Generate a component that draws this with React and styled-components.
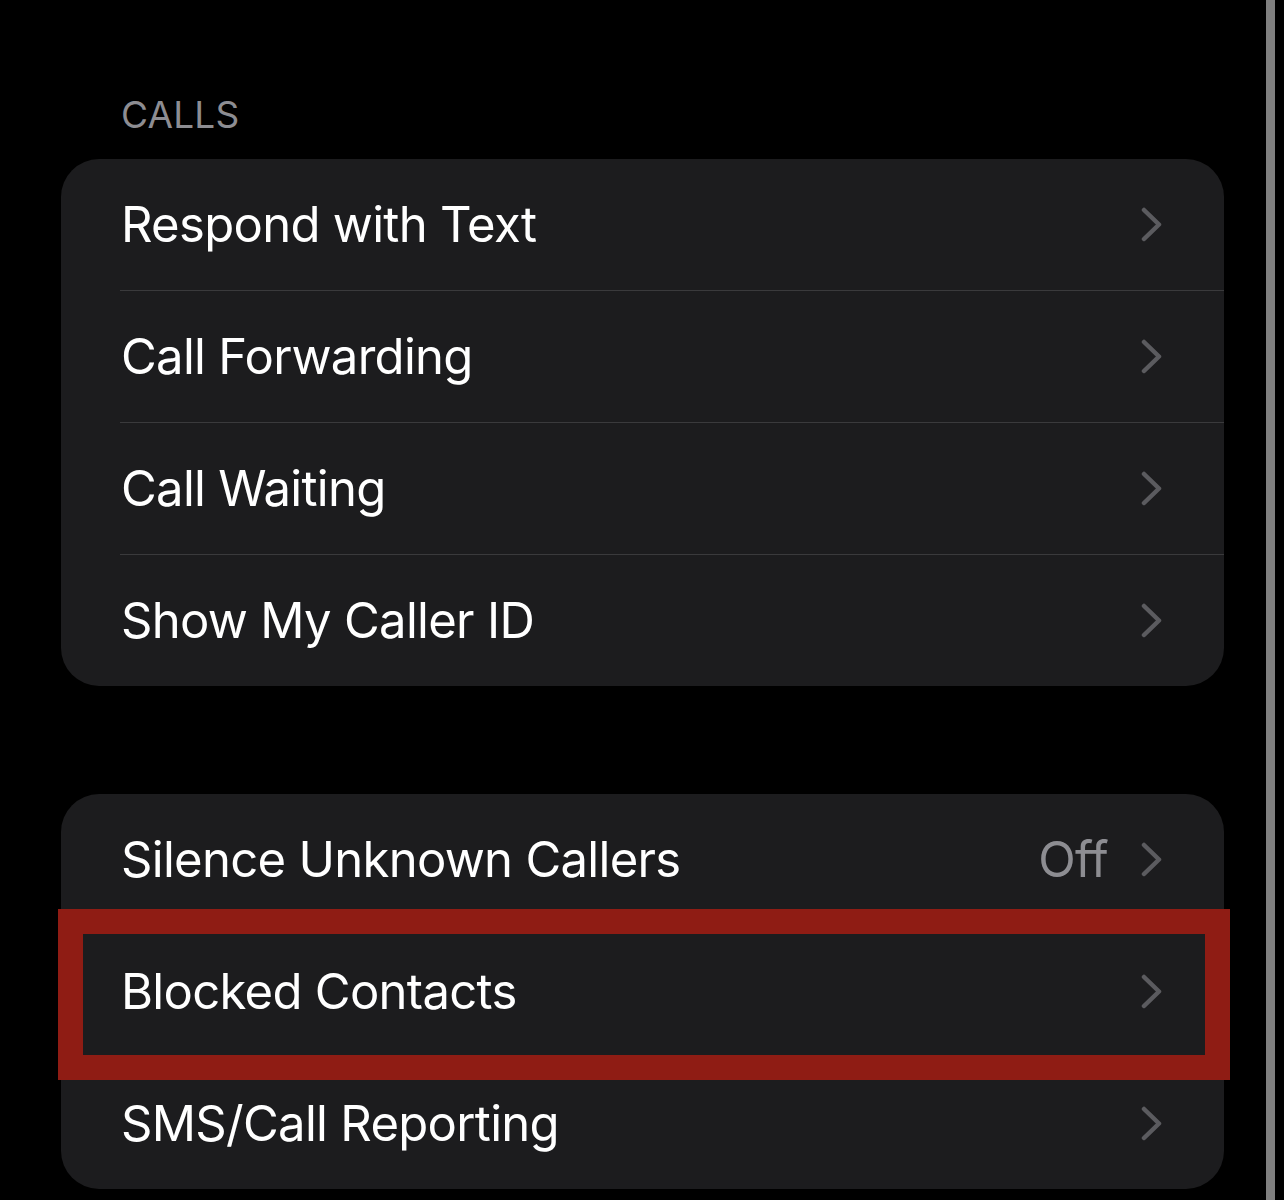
import React from "react";
import styled, { createGlobalStyle } from "styled-components";

const Global = createGlobalStyle`
  html, body {
    margin: 0;
    padding: 0;
    background: #000;
  }
  body {
    font-family: Inter, "Noto Sans", "Liberation Sans", sans-serif;
    -webkit-font-smoothing: antialiased;
  }
`;

const Page = styled.div`
  display: flex;
  width: 1284px;
  height: 1200px;
  background: #000;
  overflow: hidden;
`;

const Main = styled.main`
  width: 1163px;
  padding: 0 42px 0 61px;
  display: flex;
  flex-direction: column;
`;

const ScrollTrack = styled.div`
  width: 9px;
  height: 100%;
  background: #808080;
`;

const SectionHeader = styled.div`
  padding: 93px 0 22px 60px;
  font-size: 37px;
  line-height: 44px;
  color: #8d8d92;
  letter-spacing: 0.2px;
`;

const Group = styled.div`
  background: #1c1c1e;
  border-radius: 38px;
  display: flex;
  flex-direction: column;
  margin-top: ${(p) => p.$top || 0}px;
`;

const Row = styled.div`
  position: relative;
  height: 131px;
  display: flex;
  align-items: center;
  padding: 0 62px 0 60px;
  & + & {
    margin-top: 1px;
  }
  & + &::before {
    content: "";
    position: absolute;
    top: -1px;
    left: 59px;
    right: 0;
    height: 1px;
    background: #3a3a3c;
  }
`;

const Label = styled.span`
  flex: 1;
  font-size: 49px;
  color: #fff;
  letter-spacing: -0.7px;
`;

const Detail = styled.span`
  font-size: 49px;
  color: #8d8d92;
  letter-spacing: -0.7px;
  margin-right: 33px;
`;

const Highlight = styled.div`
  position: absolute;
  top: -17px;
  bottom: -23px;
  left: -3px;
  right: -6px;
  border: 25px solid #8f1c14;
  pointer-events: none;
  z-index: 1;
`;

function Chevron() {
  return (
    <svg width="21" height="35" viewBox="0 0 21 35" fill="none">
      <polyline
        points="3,3 18,17.5 3,32"
        stroke="#5b5b5f"
        strokeWidth="4.5"
        strokeLinecap="round"
        strokeLinejoin="round"
      />
    </svg>
  );
}

const calls = [
  "Respond with Text",
  "Call Forwarding",
  "Call Waiting",
  "Show My Caller ID",
];

const blocking = [
  { label: "Silence Unknown Callers", detail: "Off" },
  { label: "Blocked Contacts", marked: true },
  { label: "SMS/Call Reporting" },
];

export default function App() {
  return (
    <>
      <Global />
      <Page>
        <Main>
          <SectionHeader>CALLS</SectionHeader>
          <Group>
            {calls.map((c) => (
              <Row key={c}>
                <Label>{c}</Label>
                <Chevron />
              </Row>
            ))}
          </Group>
          <Group $top={108}>
            {blocking.map((r) => (
              <Row key={r.label}>
                <Label>{r.label}</Label>
                {r.detail && <Detail>{r.detail}</Detail>}
                <Chevron />
                {r.marked && <Highlight />}
              </Row>
            ))}
          </Group>
        </Main>
        <ScrollTrack />
      </Page>
    </>
  );
}
